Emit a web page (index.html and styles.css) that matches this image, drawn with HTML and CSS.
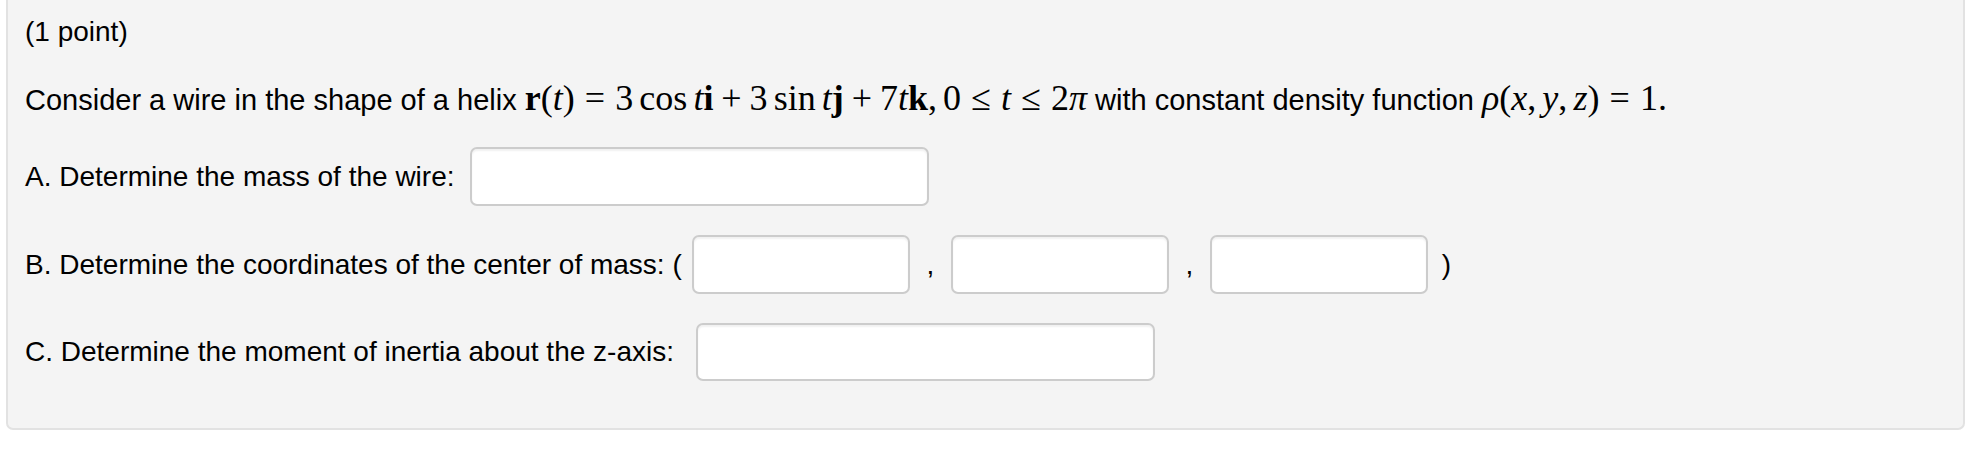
FILE: index.html
```html
<!DOCTYPE html>
<html>
<head>
<meta charset="utf-8">
<link rel="stylesheet" href="styles.css">
</head>
<body>
<div class="problem">
  <div class="row r-point">(1 point)</div>
  <div class="row r-intro"><span class="line">Consider a wire in the shape of a helix <span class="math"><b>r</b>(<i>t</i>)<span class="rel">=</span>3<span class="fn">cos</span><i>t</i><b>i</b><span class="bin">+</span>3<span class="fn">sin</span><i>t</i><b>j</b><span class="bin">+</span>7<i>t</i><b>k</b>,<span class="th"></span>0<span class="rel">≤</span><i>t</i><span class="rel">≤</span>2<i>π</i></span> with constant density function <span class="math"><i>ρ</i>(<i>x</i>,<span class="th"></span><i>y</i>,<span class="th"></span><i>z</i>)<span class="rel">=</span>1.</span></span></div>
  <div class="row r-a"><span class="label">A. Determine the mass of the wire:</span><input class="ans wide" type="text"></div>
  <div class="row r-b"><span class="label">B. Determine the coordinates of the center of mass: (</span><input class="ans narrow" type="text"><span class="sep">,</span><input class="ans narrow" type="text"><span class="sep">,</span><input class="ans narrow" type="text"><span class="close">)</span></div>
  <div class="row r-c"><span class="label">C. Determine the moment of inertia about the z-axis:</span><input class="ans wide" type="text"></div>
</div>
</body>
</html>
```
FILE: styles.css
```css
html, body {
  margin: 0;
  padding: 0;
  background: #ffffff;
}
body {
  font-family: "Liberation Sans", Arial, Helvetica, sans-serif;
  font-size: 28px;
  color: #000;
}
.problem {
  box-sizing: border-box;
  margin: 0 21px 0 6px;
  height: 430px;
  background: #f4f4f4;
  border: 2px solid #e2e2e2;
  border-top: none;
  border-radius: 0 0 7px 7px;
  padding: 0 0 0 17px;
}
.row {
  display: flex;
  align-items: center;
  white-space: pre;
}
.r-point { height: 64px; }
.r-intro { height: 70px; font-size: 29px; }
.r-a { height: 59px; margin-top: 13px; }
.r-b { height: 59px; margin-top: 29px; }
.r-c { height: 58px; margin-top: 29px; }
.line { line-height: 1.2; }
.math {
  font-family: "Liberation Serif", "Times New Roman", serif;
  font-size: 36px;
  line-height: 1;
}
.math b { font-weight: bold; }
.rel { margin: 0 0.28em; }
.bin { margin: 0 0.22em; }
.fn { margin: 0 0.17em; }
.th { display: inline-block; width: 0.17em; }
.label { margin-right: 15px; }
.r-b .label { margin-right: 10px; }
.r-c .label { margin-right: 22px; }
.ans {
  box-sizing: border-box;
  height: 100%;
  background: #fff;
  border: 2px solid #cccccc;
  border-radius: 7px;
  box-shadow: inset 0 2px 2px rgba(0,0,0,0.06);
  margin: 0;
  padding: 0 10px;
  font: inherit;
}
.wide { width: 459px; }
.narrow { width: 218px; }
.sep { width: 41px; text-align: center; }
.close { margin-left: 14px; }
```
